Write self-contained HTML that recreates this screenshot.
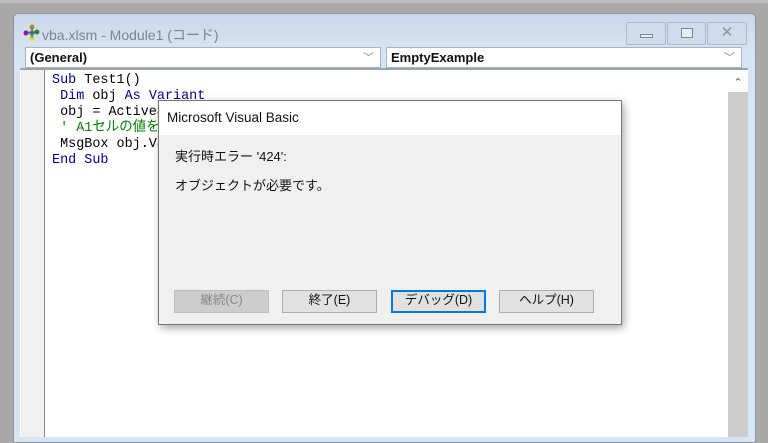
<!DOCTYPE html>
<html><head><meta charset="utf-8"><style>
*{margin:0;padding:0;box-sizing:border-box}
body{width:768px;height:437px;overflow:hidden;background:#a8a8a8;position:relative;font-family:"Liberation Sans","Noto Sans CJK JP",sans-serif}
.abs{position:absolute}
.win{left:13px;top:13px;width:743px;height:430px;background:linear-gradient(#c9d8ea,#d7e4f2 40px);border:1px solid #8d96a0;border-radius:5px 5px 0 0}
.title{left:42px;top:25px;font-size:14px;color:#7a8594}
.cb{height:21px;background:#fff;border:1px solid #a8b4c2;font-size:13px;font-weight:bold;color:#111;padding:2px 0 0 4px}
.cb span{position:absolute;right:6px;top:1px;font-weight:normal;color:#888;font-size:11px}
.wb{top:22px;height:23px;border:1px solid #a9bbd0;background:#cfdcec;border-radius:2px}
.code{left:20px;top:68px;width:728px;height:369px;background:#fff;border-top:2px solid #9aa3ad}
.gut{left:21px;top:70px;width:24px;height:367px;background:#f0f0f0;border-right:1px solid #888}
.src{left:52px;top:72px;font-family:"Liberation Mono","Noto Sans CJK JP",monospace;font-size:14px;line-height:16px;white-space:pre;color:#000;transform:scaleX(0.96);transform-origin:0 0}
.k{color:#00008b}.c{color:#008000}
.sb{left:728px;top:72px;width:20px;height:365px;background:#cdcdcd}
.sbt{left:728px;top:72px;width:20px;height:20px;background:#fff;text-align:center;font-size:11px;color:#555;padding-top:4px}
.dlg{left:158px;top:100px;width:464px;height:225px;background:#f0f0f0;border:1px solid #777;box-shadow:2px 3px 8px rgba(0,0,0,.35)}
.dt{left:0;top:0;width:462px;height:34px;background:#fff;font-size:13.5px;color:#111;padding:9px 0 0 8px}
.txt{font-size:13px;color:#111}
.btn{top:189px;width:95px;height:23px;background:#e1e1e1;border:1px solid #adadad;font-size:12.5px;text-align:center;line-height:19px;color:#111}
</style></head><body>
<div class="abs" style="left:0;top:0;width:768px;height:3px;background:#bdbdbd"></div>
<div class="abs win"></div>
<div class="abs" style="left:22px;top:23px;width:18px;height:18px">
<svg width="18" height="18"><circle cx="4" cy="10" r="2.5" fill="#a0a"/><circle cx="10" cy="4" r="2.5" fill="#c80"/><circle cx="10" cy="10" r="3" fill="#3ac"/><circle cx="15" cy="9" r="2.5" fill="#383"/><circle cx="10" cy="15" r="2.5" fill="#dd0"/><path d="M4 10L15 9M10 4L10 15" stroke="#555" stroke-width="1"/></svg></div>
<div class="abs title">vba.xlsm - Module1 (コード)</div>
<div class="abs wb" style="left:626px;width:40px"><div class="abs" style="left:13px;top:11px;width:13px;height:4px;border:1px solid #7d8896;background:#e6eef7"></div></div>
<div class="abs wb" style="left:667px;width:39px"><div class="abs" style="left:13px;top:5px;width:12px;height:10px;border:1px solid #7d8896;background:#e6eef7"></div></div>
<div class="abs wb" style="left:707px;width:40px;text-align:center;color:#8a97a6;font-size:15px;line-height:20px">✕</div>
<div class="abs cb" style="left:25px;top:47px;width:356px">(General)<span>﹀</span></div>
<div class="abs cb" style="left:386px;top:47px;width:356px">EmptyExample<span>﹀</span></div>
<div class="abs code"></div>
<div class="abs gut"></div>
<div class="abs src"><span class="k">Sub</span> Test1()
 <span class="k">Dim</span> obj <span class="k">As</span> <span class="k">Variant</span>
 obj = ActiveSheet.Range("A1")
 <span class="c">' A1セルの値を表示</span>
 MsgBox obj.Value
<span class="k">End Sub</span></div>
<div class="abs sb"></div>
<div class="abs sbt">⌃</div>
<div class="abs" style="left:748px;top:70px;width:8px;height:367px;background:#d7e4f2;border-right:1px solid #8d96a0"></div>
<div class="abs dlg">
<div class="abs dt">Microsoft Visual Basic</div>
<div class="abs txt" style="left:16px;top:45px">実行時エラー '424':</div>
<div class="abs txt" style="left:16px;top:74px">オブジェクトが必要です。</div>
<div class="abs btn" style="left:15px;background:#cccccc;border-color:#bfbfbf;color:#888">継続(C)</div>
<div class="abs btn" style="left:123px">終了(E)</div>
<div class="abs btn" style="left:232px;border:2px solid #0078d7;line-height:17px">デバッグ(D)</div>
<div class="abs btn" style="left:340px">ヘルプ(H)</div>
</div>
</body></html>
